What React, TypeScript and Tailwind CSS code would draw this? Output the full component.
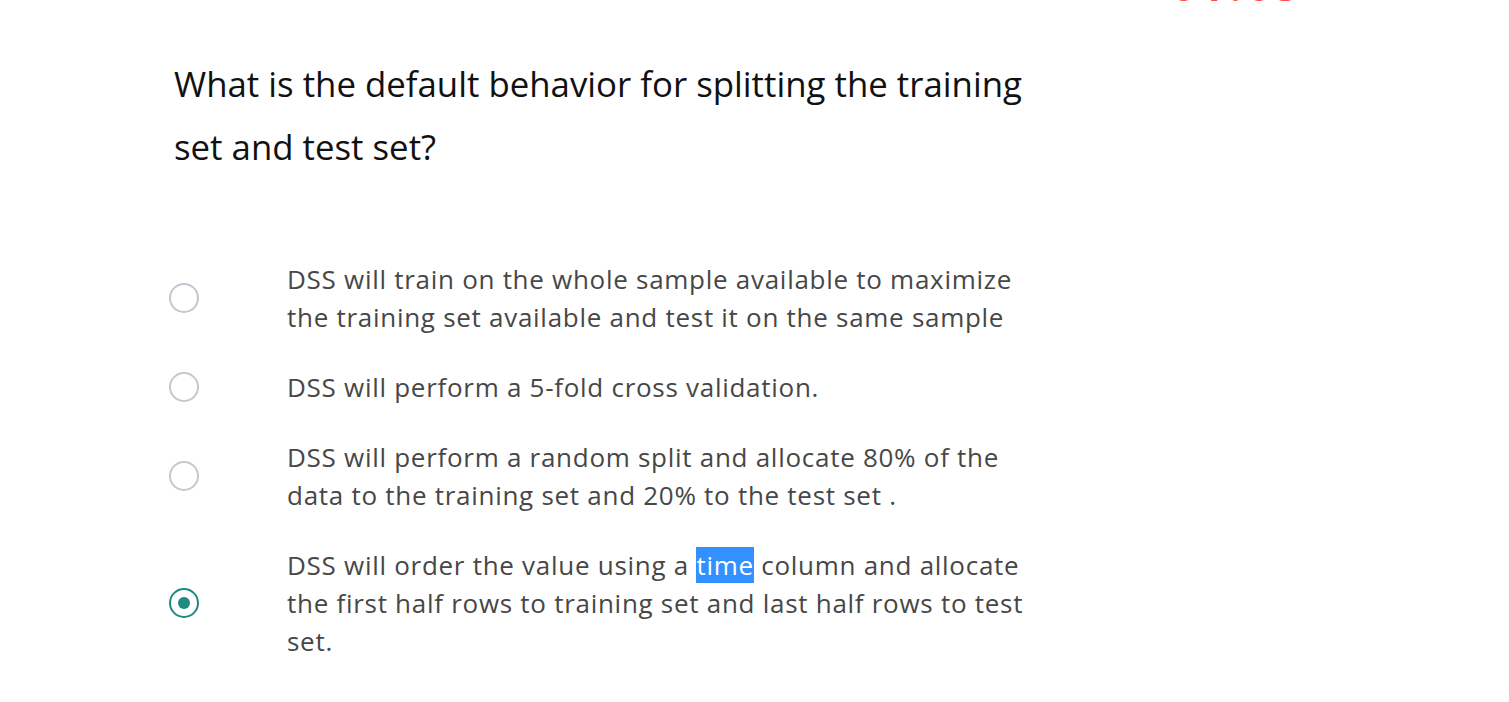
import React from "react";

const options = [
  "DSS will train on the whole sample available to maximize the training set available and test it on the same sample",
  "DSS will perform a 5-fold cross validation.",
  "DSS will perform a random split and allocate 80% of the data to the training set and 20% to the test set .",
];

function Radio({ checked }: { checked?: boolean }) {
  return checked ? (
    <div className="w-[30px] h-[30px] rounded-full border-[2.5px] border-[#1f8a80] flex items-center justify-center shrink-0">
      <div className="w-[12px] h-[12px] rounded-full bg-[#1f8a80]" />
    </div>
  ) : (
    <div className="w-[30px] h-[30px] rounded-full border-[2.5px] border-[#c2c8d0] shrink-0" />
  );
}

export default function App() {
  return (
    <div className="relative w-[1509px] h-[702px] bg-white overflow-hidden" style={{ fontFamily: "'Open Sans', 'Noto Sans', sans-serif" }}>
      <div className="absolute left-[1172px] top-[-44px] text-[40px] font-bold text-[#ff4d4d] tracking-[6px]">01:05</div>
      <div className="pl-[174px] pt-[52px]">
        <h1 className="text-[34.8px] leading-[63px] text-[#111] max-w-[870px]">
          What is the default behavior for splitting the training set and test set?
        </h1>
        <div className="mt-[82px] flex flex-col gap-[32px]">
          {options.map((o, i) => (
            <div key={i} className="flex items-center">
              <div className="w-[118px] -ml-[5px]"><Radio /></div>
              <div className="text-[26px] leading-[38px] tracking-[0.72px] text-[#474747] max-w-[752px]">{o}</div>
            </div>
          ))}
          <div className="flex items-center">
            <div className="w-[118px] -ml-[5px]"><Radio checked /></div>
            <div className="text-[26px] leading-[38px] tracking-[0.72px] text-[#474747] max-w-[752px]">
              DSS will order the value using a <span className="bg-[#3390ff] text-white">time</span> column and allocate the first half rows to training set and last half rows to test set.
            </div>
          </div>
        </div>
      </div>
    </div>
  );
}
